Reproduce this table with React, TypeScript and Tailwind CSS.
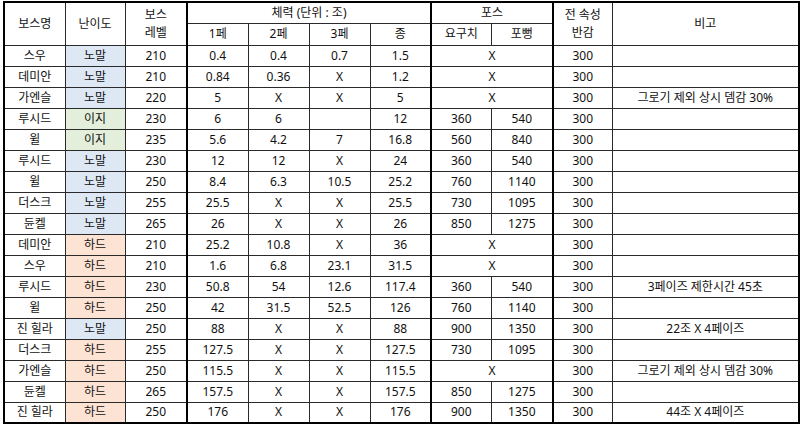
type Diff = "노말" | "이지" | "하드";

interface BossRow {
  name: string;
  diff: Diff;
  level: number;
  hp: [string, string, string, string];
  force: [string, string] | null;
  resist: number;
  note?: string;
}

const rows: BossRow[] = [
  { name: "스우", diff: "노말", level: 210, hp: ["0.4", "0.4", "0.7", "1.5"], force: null, resist: 300 },
  { name: "데미안", diff: "노말", level: 210, hp: ["0.84", "0.36", "X", "1.2"], force: null, resist: 300 },
  { name: "가엔슬", diff: "노말", level: 220, hp: ["5", "X", "X", "5"], force: null, resist: 300, note: "그로기 제외 상시 뎀감 30%" },
  { name: "루시드", diff: "이지", level: 230, hp: ["6", "6", "", "12"], force: ["360", "540"], resist: 300 },
  { name: "윌", diff: "이지", level: 235, hp: ["5.6", "4.2", "7", "16.8"], force: ["560", "840"], resist: 300 },
  { name: "루시드", diff: "노말", level: 230, hp: ["12", "12", "X", "24"], force: ["360", "540"], resist: 300 },
  { name: "윌", diff: "노말", level: 250, hp: ["8.4", "6.3", "10.5", "25.2"], force: ["760", "1140"], resist: 300 },
  { name: "더스크", diff: "노말", level: 255, hp: ["25.5", "X", "X", "25.5"], force: ["730", "1095"], resist: 300 },
  { name: "듄켈", diff: "노말", level: 265, hp: ["26", "X", "X", "26"], force: ["850", "1275"], resist: 300 },
  { name: "데미안", diff: "하드", level: 210, hp: ["25.2", "10.8", "X", "36"], force: null, resist: 300 },
  { name: "스우", diff: "하드", level: 210, hp: ["1.6", "6.8", "23.1", "31.5"], force: null, resist: 300 },
  { name: "루시드", diff: "하드", level: 230, hp: ["50.8", "54", "12.6", "117.4"], force: ["360", "540"], resist: 300, note: "3페이즈 제한시간 45초" },
  { name: "윌", diff: "하드", level: 250, hp: ["42", "31.5", "52.5", "126"], force: ["760", "1140"], resist: 300 },
  { name: "진 힐라", diff: "노말", level: 250, hp: ["88", "X", "X", "88"], force: ["900", "1350"], resist: 300, note: "22조 X 4페이즈" },
  { name: "더스크", diff: "하드", level: 255, hp: ["127.5", "X", "X", "127.5"], force: ["730", "1095"], resist: 300 },
  { name: "가엔슬", diff: "하드", level: 250, hp: ["115.5", "X", "X", "115.5"], force: null, resist: 300, note: "그로기 제외 상시 뎀감 30%" },
  { name: "듄켈", diff: "하드", level: 265, hp: ["157.5", "X", "X", "157.5"], force: ["850", "1275"], resist: 300 },
  { name: "진 힐라", diff: "하드", level: 250, hp: ["176", "X", "X", "176"], force: ["900", "1350"], resist: 300, note: "44조 X 4페이즈" },
];

const diffBg: Record<Diff, string> = {
  노말: "bg-[#dde8f4]",
  이지: "bg-[#e3efdb]",
  하드: "bg-[#fce3d4]",
};

// thin grid line; thick ones override on the right side
const cell = "border border-[#2a2a2a] p-0 text-center align-middle whitespace-nowrap";
const thickR = "border-r-2 border-r-black";

export default function App() {
  return (
    <div className="h-[426px] w-[800px] bg-white pl-[3px] pt-[1px] text-[12px] text-[#111] [font-family:'Noto_Sans','Noto_Sans_CJK_KR',sans-serif]">
      <table className="w-[795px] table-fixed border-collapse border-2 border-black">
        <colgroup>
          <col className="w-[61px]" />
          <col className="w-[60px]" />
          <col className="w-[62px]" />
          <col className="w-[61px]" />
          <col className="w-[61px]" />
          <col className="w-[61px]" />
          <col className="w-[61px]" />
          <col className="w-[60px]" />
          <col className="w-[62px]" />
          <col className="w-[59px]" />
          <col className="w-[187px]" />
        </colgroup>
        <thead className="font-normal">
          <tr className="h-[21px]">
            <th rowSpan={2} className={`${cell} font-normal`}>보스명</th>
            <th rowSpan={2} className={`${cell} font-normal`}>난이도</th>
            <th rowSpan={2} className={`${cell} ${thickR} font-normal leading-[18px]`}>
              보스
              <br />
              레벨
            </th>
            <th colSpan={4} className={`${cell} ${thickR} font-normal`}>체력 (단위 : 조)</th>
            <th colSpan={2} className={`${cell} ${thickR} font-normal`}>포스</th>
            <th rowSpan={2} className={`${cell} font-normal leading-[18px]`}>
              전 속성
              <br />
              반감
            </th>
            <th rowSpan={2} className={`${cell} font-normal`}>비고</th>
          </tr>
          <tr className="h-[22px]">
            <th className={`${cell} font-normal`}>1페</th>
            <th className={`${cell} font-normal`}>2페</th>
            <th className={`${cell} font-normal`}>3페</th>
            <th className={`${cell} ${thickR} font-normal`}>종</th>
            <th className={`${cell} font-normal`}>요구치</th>
            <th className={`${cell} ${thickR} font-normal`}>포뻥</th>
          </tr>
        </thead>
        <tbody>
          {rows.map((r, i) => (
            <tr key={i} className="h-[21px]">
              <td className={cell}>{r.name}</td>
              <td className={`${cell} ${diffBg[r.diff]}`}>{r.diff}</td>
              <td className={`${cell} ${thickR}`}>{r.level}</td>
              <td className={cell}>{r.hp[0]}</td>
              <td className={cell}>{r.hp[1]}</td>
              <td className={cell}>{r.hp[2]}</td>
              <td className={`${cell} ${thickR}`}>{r.hp[3]}</td>
              {r.force ? (
                <>
                  <td className={cell}>{r.force[0]}</td>
                  <td className={`${cell} ${thickR}`}>{r.force[1]}</td>
                </>
              ) : (
                <td colSpan={2} className={`${cell} ${thickR}`}>X</td>
              )}
              <td className={cell}>{r.resist}</td>
              <td className={cell}>{r.note ?? ""}</td>
            </tr>
          ))}
        </tbody>
      </table>
    </div>
  );
}
